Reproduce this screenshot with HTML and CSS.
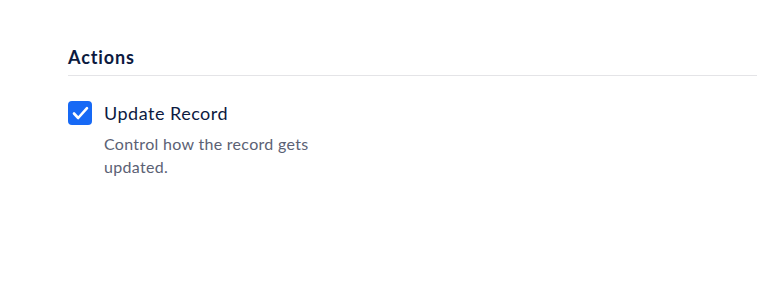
FILE: index.html
```html
<!DOCTYPE html>
<html>
<head>
<meta charset="utf-8">
<link rel="stylesheet" href="styles.css">
</head>
<body>
<section class="panel">
  <h2 class="title">Actions</h2>
  <div class="option">
    <span class="check">
      <svg viewBox="0 0 24 24" width="24" height="24"><path d="M6 12.5l4.2 4.5 8.8-9.8" fill="none" stroke="#fff" stroke-width="2.6" stroke-linecap="round" stroke-linejoin="round"/></svg>
    </span>
    <div class="text">
      <div class="label">Update Record</div>
      <div class="desc">Control how the record gets updated.</div>
    </div>
  </div>
</section>
</body>
</html>
```
FILE: styles.css
```css
html, body { margin: 0; padding: 0; background: #fff; }
body { font-family: Lato, "Noto Sans", sans-serif; }
.panel { padding: 44px 0 0 68px; }
.title {
  margin: 0;
  font-size: 18px;
  font-weight: 700;
  letter-spacing: 0.9px;
  color: #0c1a3f;
  line-height: 26px;
  padding-bottom: 5px;
  border-bottom: 1px solid #e4e4e7;
}
.option { display: flex; gap: 12px; margin-top: 25px; align-items: flex-start; }
.check {
  width: 24px; height: 24px; border-radius: 4px; background: #1769f5;
  display: flex; flex: none;
}
.label { font-size: 18px; letter-spacing: 0.5px; color: #0c1a3f; line-height: 24px; }
.desc { font-size: 16px; letter-spacing: 0.3px; color: #5b6174; line-height: 23px; margin-top: 7px; width: 215px; }
```
